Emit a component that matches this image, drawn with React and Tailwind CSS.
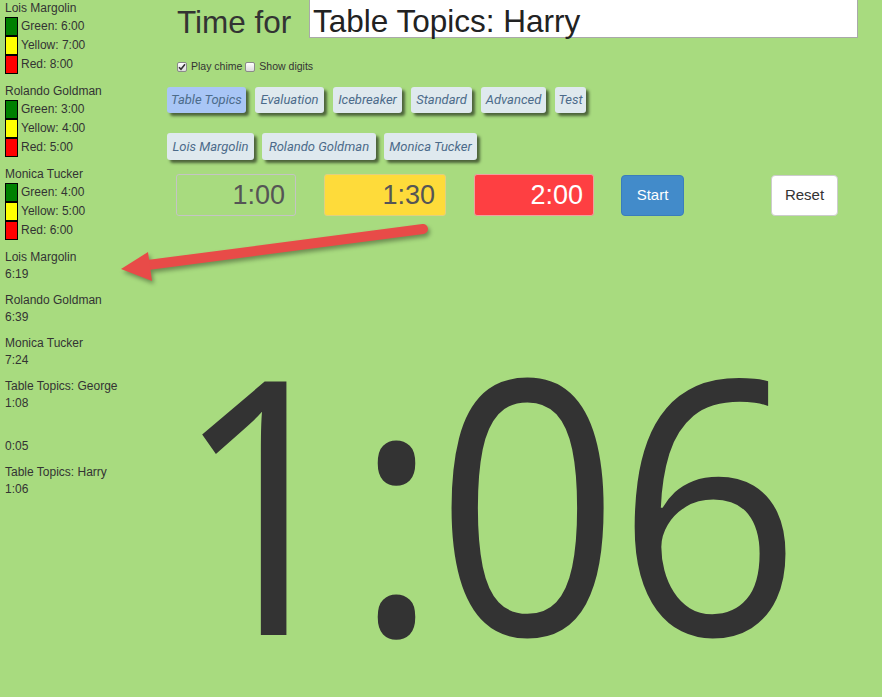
import React from 'react';

// speakers and their colour cues
const SPEAKERS = [
  { name: 'Lois Margolin', green: '6:00', yellow: '7:00', red: '8:00' },
  { name: 'Rolando Goldman', green: '3:00', yellow: '4:00', red: '5:00' },
  { name: 'Monica Tucker', green: '4:00', yellow: '5:00', red: '6:00' },
];

const RESULTS = [
  { name: 'Lois Margolin', time: '6:19' },
  { name: 'Rolando Goldman', time: '6:39' },
  { name: 'Monica Tucker', time: '7:24' },
  { name: 'Table Topics: George', time: '1:08' },
  { name: '', time: '0:05' },
  { name: 'Table Topics: Harry', time: '1:06' },
];

const PRESETS = [
  { label: 'Table Topics', w: 'w-[79px]', active: true },
  { label: 'Evaluation', w: 'w-[69px]' },
  { label: 'Icebreaker', w: 'w-[69px]' },
  { label: 'Standard', w: 'w-[61px]' },
  { label: 'Advanced', w: 'w-[65px]' },
  { label: 'Test', w: 'w-[31px]' },
];

const PEOPLE = [
  { label: 'Lois Margolin', w: 'w-[87px]' },
  { label: 'Rolando Goldman', w: 'w-[114px]' },
  { label: 'Monica Tucker', w: 'w-[93px]' },
];

function Swatch({ color, label }) {
  return (
    <div className="flex items-center h-[19px]">
      <span className={`w-[13px] h-[19px] border border-black ${color}`} />
      <span className="ml-[3px]">{label}</span>
    </div>
  );
}

function Check({ checked }) {
  return (
    <span className="w-[10px] h-[10px] border border-[#8a8a8a] rounded-[2px] bg-gradient-to-b from-white to-[#dcdcdc] flex items-center justify-center">
      {checked && (
        <svg width="8" height="8" viewBox="0 0 8 8">
          <path d="M1 4.2 L3 6.3 L7 1.3" fill="none" stroke="#333" strokeWidth="1.6" />
        </svg>
      )}
    </span>
  );
}

export default function App() {
  return (
    <div className="relative h-[697px] overflow-hidden bg-[#a8db7f] flex font-['Liberation_Sans',Arial,sans-serif] text-[#333]">
      {/* ===== sidebar ===== */}
      <div className="w-[167px] shrink-0 pl-[5px] text-[12px] leading-[17px]">
        {SPEAKERS.map(s => (
          <div key={s.name} className="mb-[9px]">
            <div>{s.name}</div>
            <Swatch color="bg-[#008000]" label={`Green: ${s.green}`} />
            <Swatch color="bg-[#ffff00]" label={`Yellow: ${s.yellow}`} />
            <Swatch color="bg-[#ff0000]" label={`Red: ${s.red}`} />
          </div>
        ))}
        {RESULTS.map((r, i) => (
          <div key={i} className="mb-[9px]">
            <div className="h-[17px]">{r.name}</div>
            <div>{r.time}</div>
          </div>
        ))}
      </div>

      {/* ===== main ===== */}
      <div className="flex-1 flex flex-col">
        <div className="flex items-end h-[38px] ml-[10px]">
          <span className="w-[132px] text-[31.5px] leading-none text-[#333]">Time for</span>
          <div className="w-[549px] h-[60px] shrink-0 bg-white border border-[#a9a9a9] flex items-end pl-[3px] text-[31.5px] leading-none text-[#222]">
            Table Topics: Harry
          </div>
        </div>

        <div className="flex items-center h-[12px] mt-[23px] ml-[10px] text-[10.5px] text-[#333]">
          <Check checked />
          <span className="ml-[4px]">Play chime</span>
          <span className="ml-[3px]"><Check /></span>
          <span className="ml-[4px]">Show digits</span>
        </div>

        <div className="flex gap-[9px] mt-[14px]">
          {PRESETS.map(p => (
            <button
              key={p.label}
              className={`${p.w} h-[26px] rounded-[3px] italic text-[13px] text-[#4c6b8a] font-['Roboto',sans-serif] shadow-[3px_3px_3px_rgba(0,0,0,0.55)] ${p.active ? 'bg-[#a9c6f6]' : 'bg-[#dfe9ee]'}`}
            >
              {p.label}
            </button>
          ))}
        </div>

        <div className="flex gap-[8px] mt-[20px]">
          {PEOPLE.map(p => (
            <button
              key={p.label}
              className={`${p.w} h-[27px] rounded-[3px] italic text-[13px] text-[#4c6b8a] font-['Roboto',sans-serif] bg-[#dfe9ee] shadow-[3px_3px_3px_rgba(0,0,0,0.55)]`}
            >
              {p.label}
            </button>
          ))}
        </div>

        <div className="flex items-center mt-[14px] ml-[9px] h-[42px]">
          <div className="w-[120px] h-[42px] border border-[#c4c4c4] rounded-[3px] flex items-center justify-end pr-[10px] text-[27px] text-[#555]">1:00</div>
          <div className="ml-[28px] w-[122px] h-[42px] border border-[#e0d080] rounded-[3px] bg-[#fedb3a] flex items-center justify-end pr-[10px] text-[27px] text-[#555]">1:30</div>
          <div className="ml-[28px] w-[120px] h-[42px] border border-[#f0a0a0] rounded-[3px] bg-[#fe3f42] flex items-center justify-end pr-[10px] text-[27px] text-white">2:00</div>
          <button className="ml-[27px] w-[63px] h-[41px] rounded-[4px] bg-[#428bca] border border-[#3a7dbc] text-white text-[15px]">Start</button>
          <button className="ml-[87px] w-[67px] h-[41px] rounded-[4px] bg-white border border-[#cccccc] text-[#333] text-[15px]">Reset</button>
        </div>

        <div className="mt-[87px] ml-[6px] w-fit text-[355px] leading-[1.1] tracking-[-4px] font-normal text-[#333] font-['Open_Sans',sans-serif] whitespace-nowrap scale-x-[0.91] origin-left">
          1:06
        </div>
      </div>

      {/* annotation arrow */}
      <svg className="absolute inset-0 pointer-events-none drop-shadow-[2px_3px_2px_rgba(0,0,0,0.35)]" width="882" height="697" viewBox="0 0 882 697">
        <line x1="423" y1="229" x2="140" y2="266" stroke="#e84b48" strokeWidth="10" strokeLinecap="round" />
        <polygon points="121,269 148,252 152,281" fill="#e84b48" />
      </svg>
    </div>
  );
}
